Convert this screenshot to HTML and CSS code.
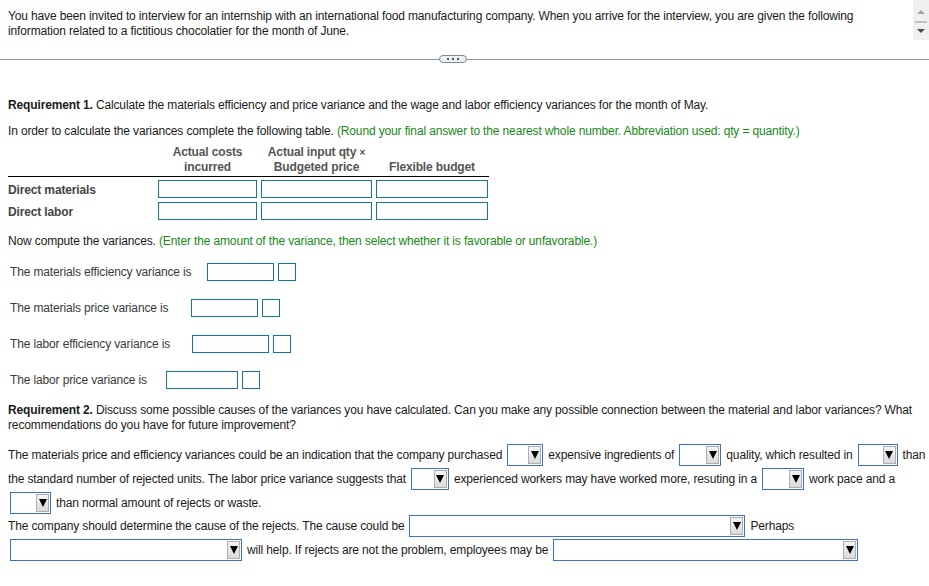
FILE: index.html
```html
<!DOCTYPE html>
<html lang="en">
<head>
<meta charset="utf-8">
<title>Variance analysis</title>
<link rel="stylesheet" href="styles.css">
</head>
<body>
<div class="intro">
  <p class="intro-text">You have been invited to interview for an internship with an international food manufacturing company. When you arrive for the interview, you are given the following information related to a fictitious chocolatier for the month of June.</p>
  <div class="scroll"><span class="arr-up"></span><span class="thumb"></span><span class="arr-down"></span></div>
</div>
<div class="divider"><span class="rule rule-left"></span><span class="handle"><i></i><i></i><i></i></span><span class="rule rule-right"></span></div>

<div class="content">
  <p class="req"><b>Requirement 1.</b> Calculate the materials efficiency and price variance and the wage and labor efficiency variances for the month of May.</p>
  <p class="instr">In order to calculate the variances complete the following table. <span class="hint">(Round your final answer to the nearest whole number. Abbreviation used: qty = quantity.)</span></p>

  <div class="table">
    <div class="thead">
      <span></span>
      <span>Actual costs<br>incurred</span>
      <span>Actual input qty <span class="times">×</span><br>Budgeted price</span>
      <span>Flexible budget</span>
    </div>
    <div class="tbody">
      <div class="trow">
        <span class="rlabel">Direct materials</span>
        <span class="box"></span><span class="box"></span><span class="box"></span>
      </div>
      <div class="trow">
        <span class="rlabel">Direct labor</span>
        <span class="box"></span><span class="box"></span><span class="box"></span>
      </div>
    </div>
  </div>

  <p class="instr2">Now compute the variances. <span class="hint">(Enter the amount of the variance, then select whether it is favorable or unfavorable.)</span></p>

  <div class="vrow first">
    <span class="vlabel l1">The materials efficiency variance is</span>
    <span class="box amt a1"></span><span class="box fu"></span>
  </div>
  <div class="vrow">
    <span class="vlabel l2">The materials price variance is</span>
    <span class="box amt a2"></span><span class="box fu"></span>
  </div>
  <div class="vrow">
    <span class="vlabel l3">The labor efficiency variance is</span>
    <span class="box amt a3"></span><span class="box fu"></span>
  </div>
  <div class="vrow">
    <span class="vlabel l4">The labor price variance is</span>
    <span class="box amt a4"></span><span class="box fu"></span>
  </div>

  <p class="req2"><b>Requirement 2.</b> Discuss some possible causes of the variances you have calculated. Can you make any possible connection between the material and labor variances? What recommendations do you have for future improvement?</p>

  <div class="fill">
    <div class="frow">
      <span>The materials price and efficiency variances could be an indication that the company purchased</span>
      <span class="dd d36"><span class="btn"></span></span>
      <span>expensive ingredients of</span>
      <span class="dd d42"><span class="btn"></span></span>
      <span>quality, which resulted in</span>
      <span class="dd d40"><span class="btn"></span></span>
      <span>than</span>
    </div>
    <div class="frow">
      <span>the standard number of rejected units. The labor price variance suggests that</span>
      <span class="dd d38"><span class="btn"></span></span>
      <span>experienced workers may have worked more, resuting in a</span>
      <span class="dd d42"><span class="btn"></span></span>
      <span>work pace and a</span>
    </div>
    <div class="frow">
      <span class="dd d41"><span class="btn"></span></span>
      <span>than normal amount of rejects or waste.</span>
    </div>
    <div class="frow r4">
      <span>The company should determine the cause of the rejects. The cause could be</span>
      <span class="dd d336"><span class="btn"></span></span>
      <span>Perhaps</span>
    </div>
    <div class="frow">
      <span class="dd d232"><span class="btn"></span></span>
      <span>will help. If rejects are not the problem, employees may be</span>
      <span class="dd d305"><span class="btn"></span></span>
    </div>
  </div>
</div>
</body>
</html>
```
FILE: styles.css
```css
html, body {
  margin: 0;
  padding: 0;
  background: #fff;
}
body {
  font-family: Arial, "Liberation Sans", sans-serif;
  font-size: 12px;
  line-height: 15px;
  letter-spacing: -0.14px;
  color: #1a1a1a;
}
p { margin: 0; }

/* intro panel */
.intro {
  display: flex;
  height: 40px;
}
.intro-text {
  padding: 9px 0 0 8px;
  width: 870px;
}
.scroll {
  margin-left: auto;
  width: 16px;
  height: 40px;
  background: #f0f0f0;
  display: flex;
  flex-direction: column;
  align-items: center;
}
.arr-up {
  margin-top: 10px;
  width: 0; height: 0;
  border-left: 4px solid transparent;
  border-right: 4px solid transparent;
  border-bottom: 4px solid #a3a3a3;
}
.thumb {
  margin-top: 7px;
  width: 12px;
  height: 2px;
  background: #c2c2c2;
}
.arr-down {
  margin-top: 6px;
  width: 0; height: 0;
  border-left: 4px solid transparent;
  border-right: 4px solid transparent;
  border-top: 4px solid #4a4a4a;
}

/* divider */
.divider {
  display: flex;
  align-items: center;
  height: 8px;
  margin-top: 15px;
}
.rule {
  height: 1px;
  background: #8c95a5;
}
.rule-left { width: 439px; }
.rule-right { flex: 1; }
.handle {
  width: 28px;
  height: 8px;
  box-sizing: border-box;
  border: 1px solid #7d8797;
  border-radius: 5px;
  background: #eef1f5;
  display: flex;
  justify-content: center;
  align-items: center;
  gap: 3px;
}
.handle i {
  width: 2px;
  height: 2px;
  background: #4b5566;
}

/* content */
.content {
  padding: 0 8px;
}
.req { margin-top: 35px; }
.instr { margin-top: 11px; }
.hint { color: #168a16; }

/* table */
.table {
  margin-top: 6px;
  width: 481px;
}
.thead,
.trow {
  display: grid;
  grid-template-columns: 146px 99px 111px 112px;
  column-gap: 4px;
}
.thead {
  align-items: end;
  font-weight: bold;
  color: #555;
  text-align: center;
  border-bottom: 1px solid #000;
  padding-bottom: 1px;
}
.times { font-size: 10px; }
.tbody { padding-top: 1px; }
.trow {
  height: 22px;
  align-items: center;
}
.rlabel {
  font-weight: bold;
  color: #444;
  padding-top: 3px;
}
.box {
  display: block;
  height: 18px;
  box-sizing: border-box;
  border: 1px solid #137a95;
  background: #fff;
}

.instr2 { margin-top: 12px; }

/* variance rows */
.vrow {
  display: flex;
  align-items: center;
  height: 20px;
  margin-top: 16px;
  padding-left: 2px;
}
.vrow.first { margin-top: 13px; }
.vlabel { color: #3a3a3a; }
.l1 { width: 197px; }
.l2 { width: 181px; }
.l3 { width: 182px; }
.l4 { width: 156px; }
.a1 { width: 67px; }
.a2 { width: 67px; }
.a3 { width: 77px; }
.a4 { width: 72px; }
.fu {
  width: 18px;
  margin-left: 4px;
}

/* requirement 2 */
.req2 { margin-top: 13px; }
.fill { margin-top: 10px; }
.frow {
  display: flex;
  align-items: center;
  height: 24px;
  gap: 3px;
  white-space: nowrap;
}
.frow.r4 { margin-top: -1px; }
.dd {
  display: flex;
  justify-content: flex-end;
  align-items: center;
  height: 22px;
  box-sizing: border-box;
  border: 1px solid #3b6fd4;
  background: #fff;
  margin: 0 2px;
  padding-right: 1px;
  flex: none;
}
.btn {
  width: 13px;
  height: 18px;
  box-sizing: border-box;
  border: 1px solid #adadad;
  background: linear-gradient(#f5f5f5, #dadada);
  display: flex;
  align-items: center;
  justify-content: center;
}
.btn::after {
  content: "";
  width: 0; height: 0;
  border-left: 4px solid transparent;
  border-right: 4px solid transparent;
  border-top: 8px solid #000;
}
.d36 { width: 36px; }
.d38 { width: 38px; }
.d40 { width: 40px; }
.d41 { width: 41px; }
.d42 { width: 42px; }
.d232 { width: 232px; }
.d305 { width: 305px; }
.d336 { width: 336px; }
```
